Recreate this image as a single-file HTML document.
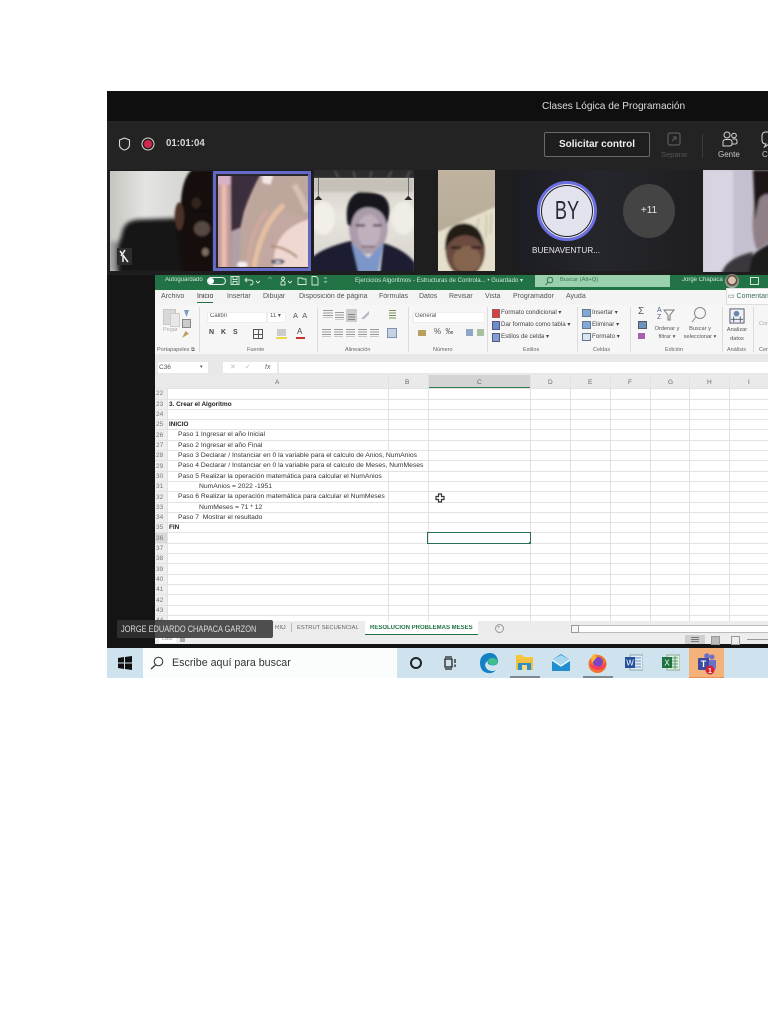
<!DOCTYPE html>
<html><head><meta charset="utf-8"><style>
html,body{margin:0;padding:0;background:#fff;width:768px;height:1024px;overflow:hidden}
#v{position:absolute;left:107px;top:91px;width:661px;height:587px;overflow:hidden;background:#141414;font-family:"Liberation Sans",sans-serif;filter:blur(.25px)}
.a{position:absolute;white-space:nowrap}
.b{filter:blur(.3px)}
.i{position:absolute;overflow:hidden}
.i svg{position:absolute;left:0;top:0}
.t{position:absolute;white-space:nowrap;font-size:7px;color:#555;filter:blur(.35px);line-height:9px}
.c{position:absolute;white-space:nowrap;font-size:6.75px;color:#333;line-height:9px;filter:blur(.25px)}
.vl{position:absolute;width:1px;background:#e2e2e2}
.hl{position:absolute;height:1px;background:#e3e3e3;left:48px;width:613px}
.rn{position:absolute;left:49px;width:11px;font-size:6.5px;color:#777;line-height:9px;filter:blur(.35px)}
.ch{position:absolute;top:287px;font-size:6.5px;color:#666;line-height:9px;filter:blur(.3px)}
.ic{position:absolute;filter:blur(.3px)}
.sep{position:absolute;top:216px;width:1px;height:45px;background:#dcdcdc}
.lb{position:absolute;white-space:nowrap;top:255px;font-size:5.5px;color:#666;line-height:9px;filter:blur(.3px)}
</style></head><body>
<div id="v">
<!-- title bar -->
<div class="a" style="left:0;top:0;width:661px;height:30px;background:#0f0f0f"></div>
<div class="a b" style="left:435px;top:9px;font-size:10.1px;color:#dcdcdc;line-height:13px">Clases Lógica de Programación</div>
<!-- toolbar -->
<div class="a" style="left:0;top:30px;width:661px;height:49px;background:#232323"></div>
<svg class="ic" style="left:11px;top:46px" width="13" height="14" viewBox="0 0 13 14"><path d="M6.5 1 L11.5 3 V8 C11.5 10.500 9 12.500 6.500 13 C4 12.500 1.500 10.500 1.500 8 V3 Z" fill="none" stroke="#d8d8d8" stroke-width="1.100"/></svg>
<svg class="ic" style="left:34px;top:46px" width="14" height="14" viewBox="0 0 14 14"><circle cx="7" cy="7" r="6" fill="none" stroke="#d8d8d8" stroke-width="1"/><circle cx="7" cy="7" r="4" fill="#d4264a"/></svg>
<div class="a b" style="left:59px;top:47px;font-size:9.7px;font-weight:bold;color:#d6d6d6;line-height:12px">01:01:04</div>
<div class="a" style="left:437px;top:41px;width:104px;height:23px;border:1px solid #6a6a6a;border-radius:2px;background:#1e1e1e"></div>
<div class="a b" style="left:437px;top:41px;width:106px;height:25px;text-align:center;font-size:10px;font-weight:bold;color:#eee;line-height:25px">Solicitar control</div>
<svg class="ic" style="left:559px;top:40px" width="16" height="16" viewBox="0 0 16 16"><rect x="2" y="2" width="12" height="12" rx="2" fill="none" stroke="#5c5c5c" stroke-width="1.200"/><path d="M6 10 L10 6 M7 6 H10 V9" fill="none" stroke="#5c5c5c"/></svg>
<div class="a b" style="left:554px;top:59px;font-size:7.5px;color:#555;line-height:10px">Separar</div>
<div class="a" style="left:595px;top:43px;width:1px;height:24px;background:#3d3d3d"></div>
<svg class="ic" style="left:614px;top:39px" width="18" height="18" viewBox="0 0 18 18"><circle cx="6" cy="5" r="3" fill="none" stroke="#d4d4d4"/><circle cx="13" cy="5.500" r="2.300" fill="none" stroke="#d4d4d4"/><path d="M2 16 V12 Q2 9.500 5 9.500 H8 Q11 9.500 11 12 V14 Q11 16 8 16 H4 Q2 16 2 16 Z M11.500 9 H14 Q16 9 16 11 V12.500 Q16 14 14 14 H11" fill="none" stroke="#d4d4d4"/></svg>
<div class="a b" style="left:611px;top:59px;font-size:8px;color:#c8c8c8;line-height:10px">Gente</div>
<svg class="ic" style="left:654px;top:40px" width="10" height="17" viewBox="0 0 10 17"><path d="M10 1 H5 Q1 1 1 5 V9 Q1 13 5 13 L3.500 16 L8 13 H10" fill="none" stroke="#d4d4d4"/></svg>
<div class="a b" style="left:655px;top:59px;font-size:8px;color:#c8c8c8;line-height:10px">C</div>
<!-- video strip -->
<div class="a" style="left:0;top:79px;width:661px;height:105px;background:#1e1e1e"></div>
<div class="a" style="left:409px;top:79px;width:190px;height:101px;background:linear-gradient(90deg,#1c1d22,#25262c 45%,#1e1e20)"></div>
<!-- tile 1 -->
<div class="i" style="left:3px;top:80px;width:102px;height:100px;background:#d8dcd8">
<svg width="102" height="100" viewBox="9 9 306 300"><defs><linearGradient id="g1" x1="0" x2="1" y1="0" y2="0"><stop offset="0" stop-color="#c5c5c0"/><stop offset=".35" stop-color="#e4e5e3"/><stop offset=".8" stop-color="#d2d2ce"/></linearGradient><filter id="f1"><feGaussianBlur stdDeviation="6"/></filter><filter id="f2"><feGaussianBlur stdDeviation="3.500"/></filter></defs>
<rect x="9" y="9" width="306" height="300" fill="url(#g1)"/>
<rect x="9" y="220" width="50" height="90" fill="#989896" filter="url(#f1)"/>
<path d="M45 195 Q50 160 90 155 L235 150 V320 H32 V240 Z" fill="#121212" filter="url(#f1)"/>
<g filter="url(#f2)"><path d="M255 5 Q226 30 222 100 L212 190 L225 320 H320 V5 Z" fill="#181110"/><ellipse cx="217" cy="145" rx="14" ry="42" fill="#4b3026"/><ellipse cx="285" cy="182" rx="24" ry="22" fill="#574a42"/><ellipse cx="295" cy="252" rx="10" ry="12" fill="#7d6e62"/><ellipse cx="268" cy="105" rx="14" ry="16" fill="#33251f"/><path d="M260 128 H310" stroke="#0c0808" stroke-width="8"/></g></svg>
<svg width="102" height="100" viewBox="0 0 102 100"><rect x="7" y="77" width="15" height="17" fill="#2d2d2d"/><path d="M10 80 L18 91 M15 79 L11 85 M13 85 V91" stroke="#eee" stroke-width="1.500" fill="none"/></svg>
</div>
<!-- tile 2 -->
<div class="i" style="left:106px;top:80px;width:98px;height:100px;background:#6468c8"></div>
<div class="i" style="left:109px;top:83px;width:92px;height:94px;background:#29262a"></div>
<div class="i" style="left:111px;top:85px;width:90px;height:91px;background:#b88">
<svg width="90" height="91" viewBox="332 24 270 273"><defs><filter id="f3"><feGaussianBlur stdDeviation="3.500"/></filter></defs><rect x="320" y="10" width="300" height="300" fill="#c2a8a0"/><g filter="url(#f3)"><rect x="320" y="10" width="50" height="300" fill="#c49a9a"/><rect x="342" y="50" width="16" height="250" fill="#e6bcb0"/><rect x="320" y="10" width="60" height="40" fill="#d8b2c6"/><path d="M370 10 H465 Q430 70 410 130 L392 210 L396 300 H372 Z" fill="#3a2e3e"/><path d="M372 190 L398 180 L420 300 H372 Z" fill="#b2a0a8"/><path d="M395 300 Q400 170 430 110 Q450 50 470 10 H620 V150 L520 130 L470 200 L450 300 Z" fill="#bda69b"/><path d="M465 10 H500 L490 50 L465 45 Z" fill="#f0e6e6"/><path d="M440 300 Q460 170 530 110" stroke="#e4bea0" stroke-width="16" fill="none"/><path d="M420 300 Q430 180 480 130" stroke="#d0a8a0" stroke-width="12" fill="none"/><path d="M500 300 Q490 180 620 150 V300 Z" fill="#f0d8d2"/><path d="M490 235 Q530 235 570 268" stroke="#b0907c" stroke-width="7" fill="none"/><ellipse cx="405" cy="290" rx="16" ry="9" fill="#f6f2f2"/><ellipse cx="512" cy="281" rx="20" ry="8" fill="#4f4560"/><ellipse cx="512" cy="282" rx="9" ry="4" fill="#cfd2de"/><path d="M560 50 Q585 90 600 130" stroke="#d6c0b2" stroke-width="18" fill="none"/></g></svg>
</div>
<!-- tile 3 -->
<div class="i" style="left:207px;top:79px;width:100px;height:101px;background:#2a2a2a">
<svg width="100" height="101" viewBox="7 6 300 303"><defs><filter id="f4"><feGaussianBlur stdDeviation="3"/></filter><linearGradient id="g3" x1="0" x2="0" y1="0" y2="1"><stop offset="0" stop-color="#cfcac2"/><stop offset=".45" stop-color="#e8e4de"/><stop offset="1" stop-color="#d5d0ca"/></linearGradient></defs><rect x="0" y="0" width="320" height="320" fill="url(#g3)"/><rect x="0" y="0" width="320" height="30" fill="#2c2c2c"/><g filter="url(#f4)"><path d="M70 10 L80 28 M125 10 L130 28 M180 10 L175 28 M240 10 L230 28 M295 10 L285 28" stroke="#666" stroke-width="4"/><rect x="5" y="32" width="300" height="40" fill="#c6c1b8"/><ellipse cx="35" cy="150" rx="35" ry="50" fill="#f2eee8"/><ellipse cx="275" cy="150" rx="35" ry="50" fill="#f0ece6"/><ellipse cx="170" cy="180" rx="58" ry="78" fill="#ab9cac"/><ellipse cx="172" cy="190" rx="34" ry="50" fill="#bfb0bc"/><path d="M108 170 Q95 95 140 72 Q190 70 215 85 Q245 110 225 170 Q215 120 170 118 Q125 118 118 175Z" fill="#17151e"/><path d="M132 172 h28 M184 172 h26" stroke="#433848" stroke-width="6"/><path d="M150 236 h40" stroke="#7d5f68" stroke-width="5"/><path d="M0 320 V270 Q30 240 120 218 L145 320 Z M215 225 Q280 245 310 285 V320 H205Z" fill="#1d1d30"/><path d="M120 225 L142 320 H198 L215 225 L170 270 Z" fill="#7d96c8"/></g><path d="M20 30 V82 M290 30 V82" stroke="#444" stroke-width="2"/><path d="M8 96 L20 83 L32 96Z M278 96 L290 83 L302 96Z" fill="#2a2a2a"/></svg>
</div>
<!-- tile 4 -->
<div class="i" style="left:331px;top:79px;width:57px;height:101px;background:#ccc">
<svg width="57" height="101" viewBox="377 6 173 303"><defs><filter id="f5"><feGaussianBlur stdDeviation="3"/></filter><linearGradient id="g4" x1="0" x2="0" y1="0" y2="1"><stop offset="0" stop-color="#c0b4a0"/><stop offset="1" stop-color="#b0a690"/></linearGradient></defs><rect x="370" y="0" width="190" height="320" fill="url(#g4)"/><g filter="url(#f5)"><path d="M370 195 L560 112 V320 H370 Z" fill="#e4dfca"/><path d="M500 150 L494 210 M525 140 L522 210 M470 170 L460 190 M540 135 L536 200" stroke="#c8c3ac" stroke-width="5" fill="none"/><ellipse cx="460" cy="250" rx="60" ry="78" fill="#6c4b40"/><ellipse cx="465" cy="275" rx="42" ry="40" fill="#86654f"/><path d="M398 250 Q395 168 455 166 Q515 168 518 250 Q505 205 460 202 Q415 205 398 250Z" fill="#211a18"/><path d="M415 240 h32 M478 240 h30" stroke="#2b1d18" stroke-width="7"/></g></svg>
</div>
<!-- BY avatar -->
<div class="a" style="left:430px;top:90px;width:60px;height:60px;border-radius:50%;background:#e3e3ee;border:3px solid #6b6fe0;box-sizing:border-box;outline:1px solid #1e1e24;outline-offset:-5px"></div>
<div class="a" style="left:430px;top:104px;width:60px;text-align:center;font-size:26px;color:#2b2b36;line-height:30px;transform:scaleX(.7)">BY</div>
<div class="a b" style="left:425px;top:154px;font-size:8.2px;color:#e8e8e8;line-height:11px">BUENAVENTUR...</div>
<div class="a" style="left:516px;top:93px;width:52px;height:54px;border-radius:50%;background:#444"></div>
<div class="a b" style="left:516px;top:113px;width:52px;text-align:center;font-size:10px;color:#e4e4e4;line-height:13px">+11</div>
<!-- tile last -->
<div class="i" style="left:596px;top:79px;width:65px;height:102px;background:#ddd">
<svg width="65" height="102" viewBox="0 0 65 102"><defs><filter id="f6"><feGaussianBlur stdDeviation="1.300"/></filter></defs><rect width="65" height="102" fill="#c5c0cf"/><rect width="30" height="102" fill="#d9d4e2" filter="url(#f6)"/><g filter="url(#f6)"><path d="M52 0 H70 V70 L54 80 Q48 66 50 44 Q52 25 52 0Z" fill="#8f8088"/><path d="M50 0 H70 V25 Q60 22 56 30 L52 50 Z" fill="#1a1518"/><path d="M45 105 Q40 85 70 72 V105 Z" fill="#1d1b1f"/><path d="M18 105 Q22 88 50 82 L45 105Z" fill="#3a383e"/></g></svg>
</div>
<!-- excel window -->
<div class="a" style="left:48px;top:184px;width:613px;height:369px;background:#f4f4f4"></div>
<div class="a" style="left:48px;top:184px;width:613px;height:15px;background:#217346"></div>
<div class="t" style="left:58px;top:185px;font-size:6px;color:#d6e8dc">Autoguardado</div>
<div class="a" style="left:100px;top:186px;width:17px;height:6px;border:1px solid #eef;border-radius:4px"></div>
<div class="a" style="left:101px;top:187px;width:6px;height:6px;border-radius:3px;background:#fff"></div>
<svg class="ic" style="left:123px;top:184px" width="112" height="12" viewBox="0 0 112 12" fill="none" stroke="#d8e8de" stroke-width=".9"><rect x="1" y="1.500" width="8" height="8"/><path d="M3 1.500 V4.500 H7 V1.500 M3 9.500 V6.500 H7 V9.500"/><path d="M17 3 L15 5 L17 7 M15 5 H20 Q23 5 23 7.500 Q23 10 20 10"/><path d="M26 6 L28 8 L30 6"/><path d="M38 4 L40 2 L42 4" opacity=".4"/><circle cx="53" cy="3.500" r="1.500"/><path d="M51 10 V7 L53 5.500 L55 7 V10Z"/><path d="M58 6 L60 8 L62 6"/><path d="M68 3 H72 L73 4 H76 V9.500 H68Z"/><path d="M82 1.500 H86 L88 3.500 V10 H82Z"/><path d="M94 3 H97 M94 6 L95.500 7.500 L97 6" opacity=".7"/></svg>
<div class="t" style="left:248px;top:185px;font-size:6.1px;color:#d2e5d9">Ejercicios Algoritmos - Estructuras de Controla... • Guardado ▾</div>
<div class="a" style="left:428px;top:184px;width:135px;height:12px;background:#9ad0ad"></div>
<svg class="ic" style="left:437px;top:185px" width="10" height="10" viewBox="0 0 10 10"><circle cx="6" cy="4" r="2.800" fill="none" stroke="#3d7353"/><path d="M4 6.200 L1.500 9" stroke="#3d7353"/></svg>
<div class="t" style="left:453px;top:185px;font-size:5.800px;color:#3d7353">Buscar (Alt+Q)</div>
<div class="t" style="left:575px;top:185px;font-size:6px;color:#d8e8de">Jorge Chapaca</div>
<div class="a" style="left:618px;top:183px;width:14px;height:14px;border-radius:50%;background:radial-gradient(circle at 50% 45%,#d8c4b0 35%,#4a3a30 40%,#c9cfc8 75%)"></div>
<div class="a" style="left:643px;top:186px;width:7px;height:6px;border:1px solid #cfe3d6"></div>
<!-- ribbon tabs -->
<div class="t" style="left:54px;top:201px">Archivo</div>
<div class="t" style="left:90px;top:201px;color:#333">Inicio</div>
<div class="a" style="left:90px;top:211px;width:16px;height:1px;background:#217346"></div>
<div class="t" style="left:120px;top:201px">Insertar</div>
<div class="t" style="left:156px;top:201px">Dibujar</div>
<div class="t" style="left:192px;top:201px">Disposición de página</div>
<div class="t" style="left:272px;top:201px">Fórmulas</div>
<div class="t" style="left:312px;top:201px">Datos</div>
<div class="t" style="left:342px;top:201px">Revisar</div>
<div class="t" style="left:378px;top:201px">Vista</div>
<div class="t" style="left:406px;top:201px">Programador</div>
<div class="t" style="left:459px;top:201px">Ayuda</div>
<div class="a" style="left:619px;top:197px;width:45px;height:15px;background:#fafafa;border:1px solid #ddd"></div>
<div class="t" style="left:621px;top:201px;color:#3f6f55">▭ Comentarios</div>
<!-- ribbon body -->
<div class="a" style="left:48px;top:214px;width:613px;height:49px;background:#f6f6f6"></div>
<div class="sep" style="left:92px"></div>
<div class="sep" style="left:210px"></div>
<div class="sep" style="left:301px"></div>
<div class="sep" style="left:380px"></div>
<div class="sep" style="left:470px"></div>
<div class="sep" style="left:523px"></div>
<div class="sep" style="left:615px"></div>
<div class="sep" style="left:646px"></div>
<!-- clipboard -->
<div class="a" style="left:56px;top:218px;width:11px;height:14px;background:#d8d8d8;border:1px solid #c6c6c6"></div>
<div class="a" style="left:63px;top:222px;width:8px;height:12px;background:#e8e8e8;border:1px solid #ccc"></div>
<div class="t" style="left:56px;top:235px;font-size:5.5px;color:#aaa">Pegar</div>
<div class="a" style="left:77px;top:219px;width:5px;height:7px;background:#7a9ac0;clip-path:polygon(0 0,100% 0,50% 100%)"></div>
<div class="a" style="left:75px;top:228px;width:7px;height:7px;background:#ccc;border:1px solid #888"></div>
<div class="a" style="left:75px;top:240px;width:7px;height:7px;background:#c2a060;clip-path:polygon(0 100%,50% 0,100% 40%)"></div>
<!-- font group -->
<div class="a" style="left:100px;top:221px;width:58px;height:9px;background:#fff;border:1px solid #eee"></div>
<div class="t" style="left:103px;top:221px;font-size:6px">Calibri</div>
<div class="a" style="left:160px;top:221px;width:17px;height:9px;background:#fff;border:1px solid #eee"></div>
<div class="t" style="left:163px;top:221px;font-size:6px">11 ▾</div>
<div class="t" style="left:186px;top:220px;font-size:7.5px;word-spacing:3px">A A</div>
<div class="t" style="left:102px;top:237px;font-size:7px;font-weight:bold;color:#444;word-spacing:5px">N K S</div>
<div class="a" style="left:146px;top:238px;width:8px;height:8px;border:1px solid #555;background:linear-gradient(#555,#555) 50% 50%/100% 1px no-repeat,linear-gradient(#555,#555) 50% 50%/1px 100% no-repeat"></div>
<div class="a" style="left:170px;top:238px;width:9px;height:7px;background:#ccc"></div>
<div class="a" style="left:169px;top:246px;width:11px;height:2px;background:#ecd94a"></div>
<div class="t" style="left:190px;top:236px;font-size:8px;color:#444">A</div>
<div class="a" style="left:189px;top:246px;width:9px;height:2px;background:#c8322a"></div>
<!-- alignment -->
<div class="a" style="left:216px;top:219px;width:10px;height:8px;background:repeating-linear-gradient(#999 0 1px,transparent 1px 2.5px)"></div>
<div class="a" style="left:228px;top:221px;width:9px;height:8px;background:repeating-linear-gradient(#999 0 1px,transparent 1px 2.5px)"></div>
<div class="a" style="left:239px;top:218px;width:11px;height:13px;background:#ccc"></div>
<div class="a" style="left:241px;top:223px;width:7px;height:6px;background:repeating-linear-gradient(#888 0 1px,transparent 1px 2.5px)"></div>
<div class="a" style="left:254px;top:220px;width:8px;height:8px;background:#b0b8c0;clip-path:polygon(0 100%,100% 0,100% 40%,40% 100%)"></div>
<div class="a" style="left:282px;top:219px;width:7px;height:10px;background:repeating-linear-gradient(#7b8e5a 0 1px,transparent 1px 2.5px)"></div>
<div class="a" style="left:215px;top:238px;width:60px;height:8px;background:repeating-linear-gradient(#999 0 1px,transparent 1px 2.5px);-webkit-mask:repeating-linear-gradient(90deg,#000 0 9px,transparent 9px 12px)"></div>
<div class="a" style="left:280px;top:237px;width:8px;height:8px;background:#c5d0e0;border:1px solid #7d93b5"></div>
<!-- number -->
<div class="a" style="left:306px;top:221px;width:70px;height:9px;background:#fff;border:1px solid #eee"></div>
<div class="t" style="left:308px;top:221px;font-size:6px">General</div>
<div class="a" style="left:311px;top:239px;width:8px;height:6px;background:#b8a060"></div>
<div class="t" style="left:327px;top:236px;font-size:8px;color:#555;word-spacing:2px">% ‰</div>
<div class="a" style="left:359px;top:238px;width:7px;height:7px;background:#8fa7c4"></div>
<div class="a" style="left:370px;top:238px;width:7px;height:7px;background:#a8c0a0"></div>
<!-- styles -->
<div class="a" style="left:385px;top:218px;width:6px;height:7px;background:#c44;border:1px solid #a55"></div>
<div class="t" style="left:394px;top:217px;font-size:6.2px;color:#444">Formato condicional ▾</div>
<div class="a" style="left:385px;top:230px;width:6px;height:7px;background:#6b8fc6;border:1px solid #558"></div>
<div class="t" style="left:394px;top:229px;font-size:6.2px;color:#444">Dar formato como tabla ▾</div>
<div class="a" style="left:385px;top:242px;width:6px;height:7px;background:#7ea0cf;border:1px solid #558"></div>
<div class="t" style="left:394px;top:241px;font-size:6.2px;color:#444">Estilos de celda ▾</div>
<!-- cells -->
<div class="a" style="left:475px;top:218px;width:7px;height:6px;background:#82a8d8;border:1px solid #678"></div>
<div class="t" style="left:485px;top:217px;font-size:6.2px;color:#444">Insertar ▾</div>
<div class="a" style="left:475px;top:230px;width:7px;height:6px;background:#82a8d8;border:1px solid #678"></div>
<div class="t" style="left:485px;top:229px;font-size:6.2px;color:#444">Eliminar ▾</div>
<div class="a" style="left:475px;top:242px;width:7px;height:6px;background:#d8e4f2;border:1px solid #678"></div>
<div class="t" style="left:485px;top:241px;font-size:6.2px;color:#444">Formato ▾</div>
<!-- edition -->
<div class="t" style="left:531px;top:216px;font-size:10px;color:#555">Σ</div>
<div class="a" style="left:531px;top:230px;width:7px;height:6px;background:#6f93bf;border:1px solid #556"></div>
<div class="a" style="left:531px;top:242px;width:7px;height:6px;background:#a75fb0"></div>
<div class="t" style="left:550px;top:216px;font-size:7px;color:#568;line-height:7px">A<br>Z</div>
<svg class="ic" style="left:556px;top:218px" width="12" height="12" viewBox="0 0 12 12"><path d="M1 1 H11 L7 6 V11 H5 V6 Z" fill="none" stroke="#777"/></svg>
<div class="t" style="left:546px;top:234px;width:28px;text-align:center;font-size:5.6px;line-height:8px;white-space:normal">Ordenar y filtrar ▾</div>
<svg class="ic" style="left:584px;top:215px" width="16" height="18" viewBox="0 0 16 18"><circle cx="9" cy="7" r="5.500" fill="none" stroke="#888"/><path d="M5 11 L1 16" stroke="#888"/></svg>
<div class="t" style="left:574px;top:234px;width:38px;text-align:center;font-size:5.6px;line-height:8px;white-space:normal">Buscar y seleccionar ▾</div>
<!-- analyze -->
<svg class="ic" style="left:622px;top:217px" width="16" height="16" viewBox="0 0 17 17"><rect x="1" y="1" width="15" height="15" fill="#eef2f6" stroke="#556"/><circle cx="8" cy="6" r="3" fill="#6a88ab"/><path d="M2 12 H15 M5 9 V15 M12 9 V15" stroke="#4c5c70"/></svg>
<div class="t" style="left:619px;top:235px;width:22px;text-align:center;font-size:5.6px;line-height:9px;white-space:normal">Analizar datos</div>
<div class="t" style="left:652px;top:229px;font-size:5.6px;color:#aaa">Conf</div>
<!-- group labels -->
<div class="lb" style="left:50px">Portapapeles ⧉</div>
<div class="lb" style="left:140px">Fuente</div>
<div class="lb" style="left:238px">Alineación</div>
<div class="lb" style="left:326px">Número</div>
<div class="lb" style="left:416px">Estilos</div>
<div class="lb" style="left:486px">Celdas</div>
<div class="lb" style="left:558px">Edición</div>
<div class="lb" style="left:620px">Análisis</div>
<div class="lb" style="left:652px">Cen</div>
<!-- formula bar -->
<div class="a" style="left:48px;top:263px;width:613px;height:21px;background:#e8e8e8"></div>
<div class="a" style="left:51px;top:271px;width:50px;height:11px;background:#fff"></div>
<div class="t" style="left:52px;top:272px;font-size:6.5px">C36</div>
<div class="t" style="left:93px;top:272px;font-size:5px">▾</div>
<div class="a" style="left:116px;top:271px;width:545px;height:11px;background:#fff"></div>
<div class="t" style="left:123px;top:272px;font-size:7px;color:#bbb;word-spacing:7px">✕ ✓</div>
<div class="t" style="left:158px;top:272px;font-size:7px;font-style:italic;color:#666">fx</div>
<div class="a" style="left:170px;top:271px;width:2px;height:11px;background:#e8e8e8"></div>
<!-- sheet -->
<div class="a" style="left:48px;top:284px;width:613px;height:250px;background:#fff"></div>
<div class="a" style="left:48px;top:284px;width:613px;height:13px;background:#eaeaea"></div>
<div class="a" style="left:321px;top:284px;width:102px;height:13px;background:#d4d4d4"></div>
<div class="a" style="left:321px;top:296px;width:102px;height:1px;background:#2f7a50"></div>
<div class="a" style="left:48px;top:297px;width:12px;height:237px;background:#eeeeee"></div>
<div class="a" style="left:48px;top:442px;width:12px;height:10px;background:#d8d8d8"></div>
<div class="ch" style="left:168px">A</div><div class="ch" style="left:298px">B</div><div class="ch" style="left:370px">C</div><div class="ch" style="left:441px">D</div><div class="ch" style="left:481px">E</div><div class="ch" style="left:521px">F</div><div class="ch" style="left:561px">G</div><div class="ch" style="left:600px">H</div><div class="ch" style="left:641px">I</div>
<!-- horizontal lines -->
<div class="hl" style="top:297px"></div><div class="hl" style="top:308px"></div><div class="hl" style="top:318px"></div><div class="hl" style="top:328px"></div><div class="hl" style="top:338px"></div><div class="hl" style="top:349px"></div><div class="hl" style="top:359px"></div><div class="hl" style="top:369px"></div><div class="hl" style="top:380px"></div><div class="hl" style="top:390px"></div><div class="hl" style="top:400px"></div><div class="hl" style="top:411px"></div><div class="hl" style="top:421px"></div><div class="hl" style="top:431px"></div><div class="hl" style="top:441px"></div><div class="hl" style="top:452px"></div><div class="hl" style="top:462px"></div><div class="hl" style="top:472px"></div><div class="hl" style="top:483px"></div><div class="hl" style="top:493px"></div><div class="hl" style="top:503px"></div><div class="hl" style="top:514px"></div><div class="hl" style="top:524px"></div>
<!-- vertical lines -->
<div class="vl" style="left:60px;top:297px;height:233px"></div>
<div class="vl" style="left:281px;top:284px;height:246px"></div>
<div class="vl" style="left:321px;top:284px;height:246px"></div>
<div class="vl" style="left:423px;top:284px;height:246px"></div>
<div class="vl" style="left:463px;top:284px;height:246px"></div>
<div class="vl" style="left:503px;top:284px;height:246px"></div>
<div class="vl" style="left:543px;top:284px;height:246px"></div>
<div class="vl" style="left:582px;top:284px;height:246px"></div>
<div class="vl" style="left:622px;top:284px;height:246px"></div>
<!-- row numbers -->
<div class="rn" style="top:298px">22</div><div class="rn" style="top:309px">23</div><div class="rn" style="top:319px">24</div><div class="rn" style="top:329px">25</div><div class="rn" style="top:340px">26</div><div class="rn" style="top:350px">27</div><div class="rn" style="top:360px">28</div><div class="rn" style="top:371px">29</div><div class="rn" style="top:381px">30</div><div class="rn" style="top:391px">31</div><div class="rn" style="top:402px">32</div><div class="rn" style="top:412px">33</div><div class="rn" style="top:422px">34</div><div class="rn" style="top:432px">35</div><div class="rn" style="top:443px">36</div><div class="rn" style="top:453px">37</div><div class="rn" style="top:463px">38</div><div class="rn" style="top:474px">39</div><div class="rn" style="top:484px">40</div><div class="rn" style="top:494px">41</div><div class="rn" style="top:505px">42</div><div class="rn" style="top:515px">43</div><div class="rn" style="top:525px">44</div>
<!-- cells text -->
<div class="c" style="left:62px;top:309px;font-weight:bold;font-size:6.4px;color:#222">3. Crear el Algoritmo</div>
<div class="c" style="left:62px;top:329px;font-weight:bold;font-size:6.4px;color:#222">INICIO</div>
<div class="c" style="left:71px;top:339px;background:#fff;padding-right:2px">Paso 1 Ingresar el año Inicial</div>
<div class="c" style="left:71px;top:350px;background:#fff;padding-right:2px">Paso 2 Ingresar el año Final</div>
<div class="c" style="left:71px;top:360px;background:#fff;padding-right:2px">Paso 3 Declarar / Instanciar en 0 la variable para el calculo de Anios, NumAnios</div>
<div class="c" style="left:71px;top:370px;background:#fff;padding-right:2px">Paso 4 Declarar / Instanciar en 0 la variable para el calculo de Meses, NumMeses</div>
<div class="c" style="left:71px;top:381px;background:#fff;padding-right:2px">Paso 5 Realizar la operación matemática para calcular el NumAnios</div>
<div class="c" style="left:92px;top:391px;background:#fff">NumAnios = 2022 -1951</div>
<div class="c" style="left:71px;top:401px;background:#fff;padding-right:2px">Paso 6 Realizar la operación matemática para calcular el NumMeses</div>
<div class="c" style="left:92px;top:412px;background:#fff">NumMeses = 71 * 12</div>
<div class="c" style="left:71px;top:422px;background:#fff">Paso 7&nbsp; Mostrar el resultado</div>
<div class="c" style="left:62px;top:432px;font-weight:bold;font-size:6.4px;color:#222">FIN</div>
<!-- selected cell -->
<div class="a" style="left:320px;top:441px;width:102px;height:10px;border:1px solid #2a7050"></div>
<div class="a" style="left:422px;top:451px;width:2px;height:2px;background:#2a7050"></div>
<!-- cursor -->
<svg class="ic" style="left:328px;top:402px" width="10" height="10" viewBox="0 0 10 10"><path d="M3.500 1 H6.500 V3.500 H9 V6.500 H6.500 V9 H3.500 V6.500 H1 V3.500 H3.500 Z" fill="#fff" stroke="#333" stroke-width="1.200"/></svg>
<!-- sheet tabs -->
<div class="a" style="left:48px;top:530px;width:613px;height:14px;background:#ececec"></div>
<div class="a" style="left:258px;top:530px;width:113px;height:13px;background:#fff;border-bottom:1px solid #217346"></div>
<div class="t" style="left:168px;top:533px;font-size:6px;color:#666">RIO</div>
<div class="a" style="left:184px;top:532px;width:1px;height:9px;background:#bbb"></div>
<div class="t" style="left:190px;top:533px;font-size:5.8px;color:#666">ESTRUT SECUENCIAL</div>
<div class="t" style="left:263px;top:533px;font-size:6px;font-weight:bold;color:#217346">RESOLUCION PROBLEMAS MESES</div>
<div class="a" style="left:388px;top:533px;width:7px;height:7px;border:1px solid #999;border-radius:50%"></div>
<div class="t" style="left:390px;top:533px;font-size:6px;color:#888">+</div>
<div class="a" style="left:464px;top:534px;width:197px;height:6px;background:#fff;border:1px solid #bbb"></div>
<div class="a" style="left:464px;top:534px;width:6px;height:6px;background:#f6f6f6;border:1px solid #999"></div>
<!-- status bar -->
<div class="a" style="left:48px;top:544px;width:613px;height:9px;background:#ededed"></div>
<div class="t" style="left:52px;top:544px;font-size:5px;color:#888;background:#fff;padding:0 3px;line-height:8px">Listo</div>
<div class="a" style="left:73px;top:546px;width:5px;height:5px;background:#aaa"></div>
<div class="a" style="left:578px;top:544px;width:20px;height:9px;background:#cfcfcf"></div>
<div class="a" style="left:584px;top:546px;width:8px;height:6px;background:repeating-linear-gradient(#777 0 1px,transparent 1px 2px)"></div>
<div class="a" style="left:604px;top:545px;width:7px;height:7px;background:#bbb;border:1px solid #999"></div>
<div class="a" style="left:624px;top:545px;width:7px;height:7px;border:1px solid #999"></div>
<div class="a" style="left:640px;top:548px;width:21px;height:1px;background:#999"></div>
<!-- presenter tag -->
<div class="a" style="left:10px;top:529px;width:156px;height:18px;background:rgba(50,50,50,.85);border-radius:2px"></div>
<div class="a b" style="left:14px;top:533px;font-size:9.5px;color:#ddd;line-height:12px;transform:scaleX(.78);transform-origin:left center">JORGE EDUARDO CHAPACA GARZON</div>
<!-- taskbar -->
<div class="a" style="left:0;top:557px;width:661px;height:30px;background:#cfe3ee"></div>
<svg class="ic" style="left:11px;top:565px" width="14" height="14" viewBox="0 0 14 14"><path d="M0 2 L6 1 V6.500 H0Z M7 1 L14 0 V6.500 H7Z M0 7.500 H6 V13 L0 12Z M7 7.500 H14 V14 L7 13Z" fill="#111"/></svg>
<div class="a" style="left:36px;top:557px;width:254px;height:30px;background:#fbfcfc"></div>
<svg class="ic" style="left:43px;top:565px" width="14" height="14" viewBox="0 0 14 14"><circle cx="8.500" cy="5.500" r="4.300" fill="none" stroke="#333"/><path d="M5.500 9 L1 13" stroke="#333" stroke-width="1.200"/></svg>
<div class="a b" style="left:65px;top:565px;font-size:10.7px;color:#333;line-height:15px">Escribe aquí para buscar</div>
<div class="a" style="left:303px;top:566px;width:8px;height:8px;border:2px solid #222;border-radius:50%"></div>
<svg class="ic" style="left:337px;top:565px" width="13" height="14" viewBox="0 0 13 14"><rect x="1" y="3" width="7" height="8" fill="none" stroke="#222" stroke-width="1.300"/><path d="M1 1 H8 M1 13 H8 M11 3 V7 M11 8.500 V11" stroke="#222" stroke-width="1.300"/></svg>
<svg class="ic" style="left:372px;top:561px" width="20" height="22" viewBox="0 0 20 22"><path d="M1 11 C1 4 6 1 11 1 C16 1 19 5 19 10 C19 13 15 14 11 13 C9 12 8 11 9 9 C6 10 5 14 8 17 C10 19 14 20 17 18 C14 22 8 22 4 19 C2 17 1 14 1 11Z" fill="#1581c5"/><path d="M9 9 C10 5 15 5 18 8 L19 11 C16 14 11 13 10 12Z" fill="#3fbf8f"/></svg>
<svg class="ic" style="left:409px;top:563px" width="17" height="17" viewBox="0 0 17 17"><path d="M0 1 H6 L8 3 H17 V16 H0Z" fill="#f5c63a"/><rect x="0" y="5" width="17" height="11" fill="#f2c040"/><rect x="2" y="9" width="13" height="7" fill="#2d8fc4"/><rect x="6" y="11" width="5" height="5" fill="#f4d98a"/></svg>
<div class="a" style="left:403px;top:585px;width:30px;height:2px;background:#7d8a92"></div>
<svg class="ic" style="left:445px;top:563px" width="18" height="17" viewBox="0 0 18 17"><path d="M9 0 L18 6 V17 H0 V6Z" fill="#1f8fd0"/><path d="M0 6 L9 12 L18 6 L9 1Z" fill="#a8d8f0"/><path d="M0 6 L9 12 L18 6" fill="none" stroke="#fff" stroke-width="1.200"/></svg>
<svg class="ic" style="left:481px;top:562px" width="19" height="20" viewBox="0 0 19 20"><circle cx="9.500" cy="11" r="9" fill="#f2732b"/><circle cx="10" cy="9" r="5" fill="#7b45c8"/><path d="M3 5 Q5 0 9 1 Q7 3 9 4 L4 10Z" fill="#fbb33a"/><path d="M1 10 Q4 18 12 17 Q18 15 18 9 Q14 15 8 13 Q3 12 1 10Z" fill="#f73c5c"/></svg>
<div class="a" style="left:476px;top:585px;width:30px;height:2px;background:#7d8a92"></div>
<svg class="ic" style="left:518px;top:563px" width="18" height="17" viewBox="0 0 18 17"><rect x="5" y="1" width="13" height="15" fill="#e6edf6" stroke="#8aa"/><path d="M10 4 H16 M10 7 H16 M10 10 H16 M10 13 H16" stroke="#6b93c8"/><rect x="0" y="3" width="10" height="11" fill="#234f9c"/><text x="5" y="11.500" font-size="8" fill="#fff" text-anchor="middle" font-family="Liberation Sans">W</text></svg>
<svg class="ic" style="left:555px;top:563px" width="18" height="17" viewBox="0 0 18 17"><rect x="5" y="1" width="13" height="15" fill="#e3efe5" stroke="#8a9"/><path d="M10 4 H16 M10 7 H16 M10 10 H16 M10 13 H16 M13 2 V15" stroke="#4f9c6a"/><rect x="0" y="3" width="10" height="11" fill="#1d7240"/><text x="5" y="11.500" font-size="8" fill="#fff" text-anchor="middle" font-family="Liberation Sans">X</text></svg>
<div class="a" style="left:582px;top:557px;width:35px;height:30px;background:#f3b27a"></div>
<div class="a" style="left:582px;top:586px;width:35px;height:1px;background:#e89050"></div>
<svg class="ic" style="left:590px;top:562px" width="20" height="22" viewBox="0 0 20 22"><circle cx="15" cy="4" r="2.500" fill="#6c70c8"/><circle cx="10" cy="3" r="2.800" fill="#6c70c8"/><path d="M10 7 H19 V14 Q19 18 14 18 Q10 18 10 14Z" fill="#6c70c8"/><rect x="1" y="5" width="11" height="12" rx="1" fill="#3e4aa0"/><text x="6.500" y="14" font-size="9" font-weight="bold" fill="#fff" text-anchor="middle" font-family="Liberation Sans">T</text><circle cx="13" cy="17" r="4.500" fill="#d3202e"/><text x="13" y="20" font-size="7" font-weight="bold" fill="#fff" text-anchor="middle" font-family="Liberation Sans">1</text></svg>
</div>
</body></html>
